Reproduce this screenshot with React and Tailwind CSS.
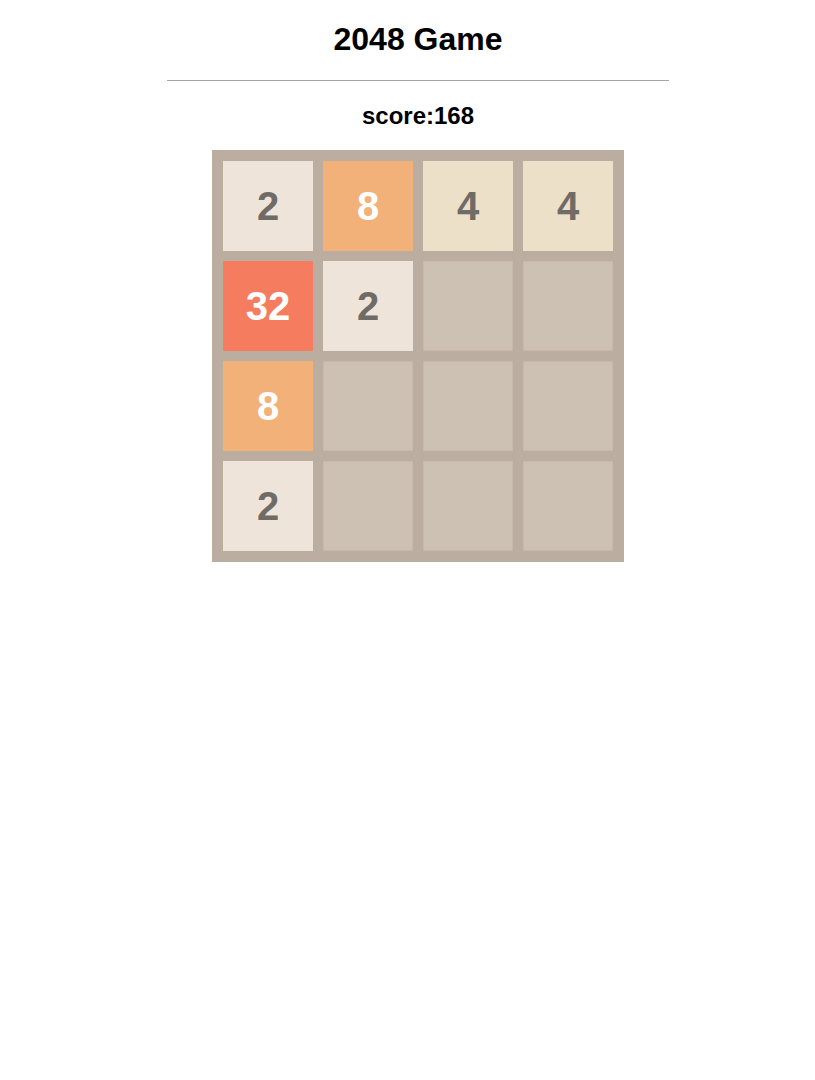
import React from 'react'

const BOARD = [
  [2, 8, 4, 4],
  [32, 2, 0, 0],
  [8, 0, 0, 0],
  [2, 0, 0, 0],
]

// tile colours keyed by value; 0 is an empty cell
const TILE_STYLES = {
  0: 'bg-[#cdc1b4] border border-[#c6b9ac]',
  2: 'bg-[#eee4da] text-[#6f6b67]',
  4: 'bg-[#ede0c8] text-[#6f6b67]',
  8: 'bg-[#f2b179] text-white',
  16: 'bg-[#f59563] text-white',
  32: 'bg-[#f67c5f] text-white',
  64: 'bg-[#f65e3b] text-white',
}

function Tile({ value }) {
  return (
    <div
      className={`w-[90px] h-[90px] flex items-center justify-center text-[40px] font-bold ${TILE_STYLES[value]}`}
    >
      {value > 0 ? value : ''}
    </div>
  )
}

export default function App() {
  const score = 168

  return (
    <div
      className="min-h-screen bg-white pl-[21px]"
      style={{ fontFamily: '"Liberation Sans", Arial, sans-serif' }}
    >
      <div className="flex flex-col items-center">
        <h1 className="text-[32px] font-bold leading-[37px] mt-[21px] text-black">2048 Game</h1>
        <div className="w-[502px] h-px bg-[#a6a6a6] mt-[22px]" />
        <h2 className="text-[24px] font-bold leading-[28px] mt-[21px] text-black">score:{score}</h2>
        <div className="mt-[20px] bg-[#bbada0] p-[11px] grid grid-cols-4 gap-[10px]">
          {BOARD.flat().map((v, i) => (
            <Tile key={i} value={v} />
          ))}
        </div>
      </div>
    </div>
  )
}
